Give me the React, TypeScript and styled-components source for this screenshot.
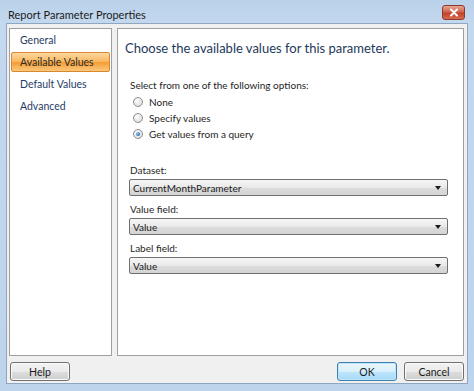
import React, { useState } from 'react';
import styled, { createGlobalStyle } from 'styled-components';

const GlobalStyle = createGlobalStyle`
  html, body {
    margin: 0;
    padding: 0;
    background: #a9c7e4;
  }
  body {
    font-family: Lato, "Open Sans", "DejaVu Sans", sans-serif;
    font-size: 11px;
    color: #1e1e1e;
  }
  * {
    box-sizing: border-box;
  }
`;

const PAGES = ['General', 'Available Values', 'Default Values', 'Advanced'];
const OPTIONS = ['None', 'Specify values', 'Get values from a query'];

export default function App() {
  const [page, setPage] = useState('Available Values');
  const [option, setOption] = useState(2);
  return (
    <>
      <GlobalStyle />
      <Window>
        <TitleBar>
          <Title>Report Parameter Properties</Title>
          <CloseButton>
            <svg width="10" height="9" viewBox="0 0 10 9">
              <path d="M2 1.5 L8 7.5 M8 1.5 L2 7.5" stroke="#fff" strokeWidth="2" strokeLinecap="round" />
            </svg>
          </CloseButton>
        </TitleBar>
        <Client>
          <Panels>
            <NavList>
              {PAGES.map((p) => (
                <NavItem key={p} active={p === page} onClick={() => setPage(p)}>
                  {p}
                </NavItem>
              ))}
            </NavList>
            <Content>
              <Heading>Choose the available values for this parameter.</Heading>
              <Label>Select from one of the following options:</Label>
              <RadioGroup>
                {OPTIONS.map((o, i) => (
                  <RadioRow key={o} onClick={() => setOption(i)}>
                    <Radio checked={i === option} />
                    {o}
                  </RadioRow>
                ))}
              </RadioGroup>
              <Field gap={21}>
                <Label>Dataset:</Label>
                <Combo>
                  <span>CurrentMonthParameter</span>
                  <Arrow />
                </Combo>
              </Field>
              <Field gap={6}>
                <Label>Value field:</Label>
                <Combo>
                  <span>Value</span>
                  <Arrow />
                </Combo>
              </Field>
              <Field gap={6}>
                <Label>Label field:</Label>
                <Combo>
                  <span>Value</span>
                  <Arrow />
                </Combo>
              </Field>
            </Content>
          </Panels>
          <Footer>
            <Button>Help</Button>
            <Spacer />
            <Button primary>OK</Button>
            <Button>Cancel</Button>
          </Footer>
        </Client>
      </Window>
    </>
  );
}

const Window = styled.div`
  width: 474px;
  height: 391px;
  background: linear-gradient(180deg, #b9d1ea 0px, #c4d8ee 24px, #bcd4ec 100%);
  padding: 0 6px 7px 6px;
  display: flex;
  flex-direction: column;
`;

const TitleBar = styled.div`
  height: 23px;
  display: flex;
  align-items: center;
  justify-content: space-between;
  padding: 0 3px 0 2px;
`;

const Title = styled.div`
  font-size: 11px;
  color: #1b1b1b;
  margin-top: 5px;
`;

const CloseButton = styled.div`
  width: 23px;
  height: 15px;
  margin-top: 2px;
  border-radius: 3px;
  border: 1px solid #8a3a30;
  background: linear-gradient(180deg, #e8a594 0%, #d2654f 45%, #c2412a 55%, #d96b4f 100%);
  display: flex;
  align-items: center;
  justify-content: center;
`;

const Client = styled.div`
  flex: 1;
  background: #f0f0f0;
  border: 1px solid #8da6c2;
  display: flex;
  flex-direction: column;
  padding: 4px 3px 0 2px;
`;

const Panels = styled.div`
  display: flex;
  gap: 5px;
  height: 328px;
`;

const NavList = styled.div`
  width: 103px;
  background: #fff;
  border: 1px solid #a0a0a0;
  padding: 1px 1px;
  display: flex;
  flex-direction: column;
`;

const NavItem = styled.div<{ active?: boolean }>`
  height: 20px;
  margin-bottom: 2px;
  padding-left: 8px;
  display: flex;
  align-items: center;
  font-size: 10.5px;
  color: ${(p) => (p.active ? '#2b2b2b' : '#1f3c66')};
  border-radius: 2px;
  border: 1px solid ${(p) => (p.active ? '#d8892f' : 'transparent')};
  background: ${(p) =>
    p.active ? 'linear-gradient(180deg, #fbd9a1 0%, #f9b55c 50%, #f59c32 51%, #fbc87c 100%)' : 'transparent'};
  cursor: default;
`;

const Content = styled.div`
  flex: 1;
  background: #fff;
  border: 1px solid #a0a0a0;
  padding: 10px 15px 0 7px;
  display: flex;
  flex-direction: column;
`;

const Heading = styled.div`
  font-size: 13px;
  line-height: 18px;
  color: #1e395b;
  margin-bottom: 21px;
`;

const Label = styled.div`
  font-size: 10px;
  line-height: 14px;
  color: #1e1e1e;
  margin-left: 5px;
`;

const RadioGroup = styled.div`
  display: flex;
  flex-direction: column;
  padding-left: 8px;
  margin-top: 2px;
`;

const RadioRow = styled.div`
  height: 16px;
  display: flex;
  align-items: center;
  gap: 6px;
  font-size: 10px;
  cursor: default;
`;

const Radio = styled.span<{ checked?: boolean }>`
  width: 10px;
  height: 10px;
  border-radius: 50%;
  border: 1px solid #8f8f8f;
  background: radial-gradient(circle at 40% 35%, #ffffff 0%, #e6e6e6 60%, #cfcfcf 100%);
  position: relative;
  &::after {
    content: '';
    display: ${(p) => (p.checked ? 'block' : 'none')};
    position: absolute;
    left: 2px;
    top: 2px;
    width: 4px;
    height: 4px;
    border-radius: 50%;
    background: radial-gradient(circle at 35% 35%, #9ad2f7 0%, #2b7fc4 60%, #1a5a9a 100%);
  }
`;

const Field = styled.div<{ gap: number }>`
  margin-top: ${(p) => p.gap}px;
  display: flex;
  flex-direction: column;
  gap: 2px;
`;

const Combo = styled.div`
  height: 17px;
  margin-left: 4px;
  border: 1px solid #707070;
  border-radius: 2px;
  background: linear-gradient(180deg, #f6f6f6 0%, #e9e9e9 50%, #dcdcdc 51%, #d4d4d4 100%);
  display: flex;
  align-items: center;
  justify-content: space-between;
  padding: 0 6px 0 3px;
  font-size: 10px;
  color: #1a1a1a;
`;

const Arrow = styled.span`
  width: 0;
  height: 0;
  border-left: 3.5px solid transparent;
  border-right: 3.5px solid transparent;
  border-top: 4px solid #1a1a1a;
`;

const Footer = styled.div`
  display: flex;
  align-items: center;
  gap: 7px;
  margin-top: 6px;
  padding-left: 1px;
`;

const Spacer = styled.div`
  flex: 1;
`;

const Button = styled.div<{ primary?: boolean }>`
  width: 60px;
  height: 19px;
  display: flex;
  align-items: center;
  justify-content: center;
  font-size: 10.5px;
  color: #1a1a1a;
  border-radius: 3px;
  border: 1px solid ${(p) => (p.primary ? '#3c7fb1' : '#707070')};
  box-shadow: inset 0 0 0 1px ${(p) => (p.primary ? '#bfe6f8' : '#fbfbfb')};
  background: ${(p) =>
    p.primary
      ? 'linear-gradient(180deg, #eaf6fd 0%, #d9f0fc 50%, #bee6fd 51%, #a7d9f5 100%)'
      : 'linear-gradient(180deg, #f2f2f2 0%, #ebebeb 50%, #dddddd 51%, #cfcfcf 100%)'};
  cursor: default;
`;
